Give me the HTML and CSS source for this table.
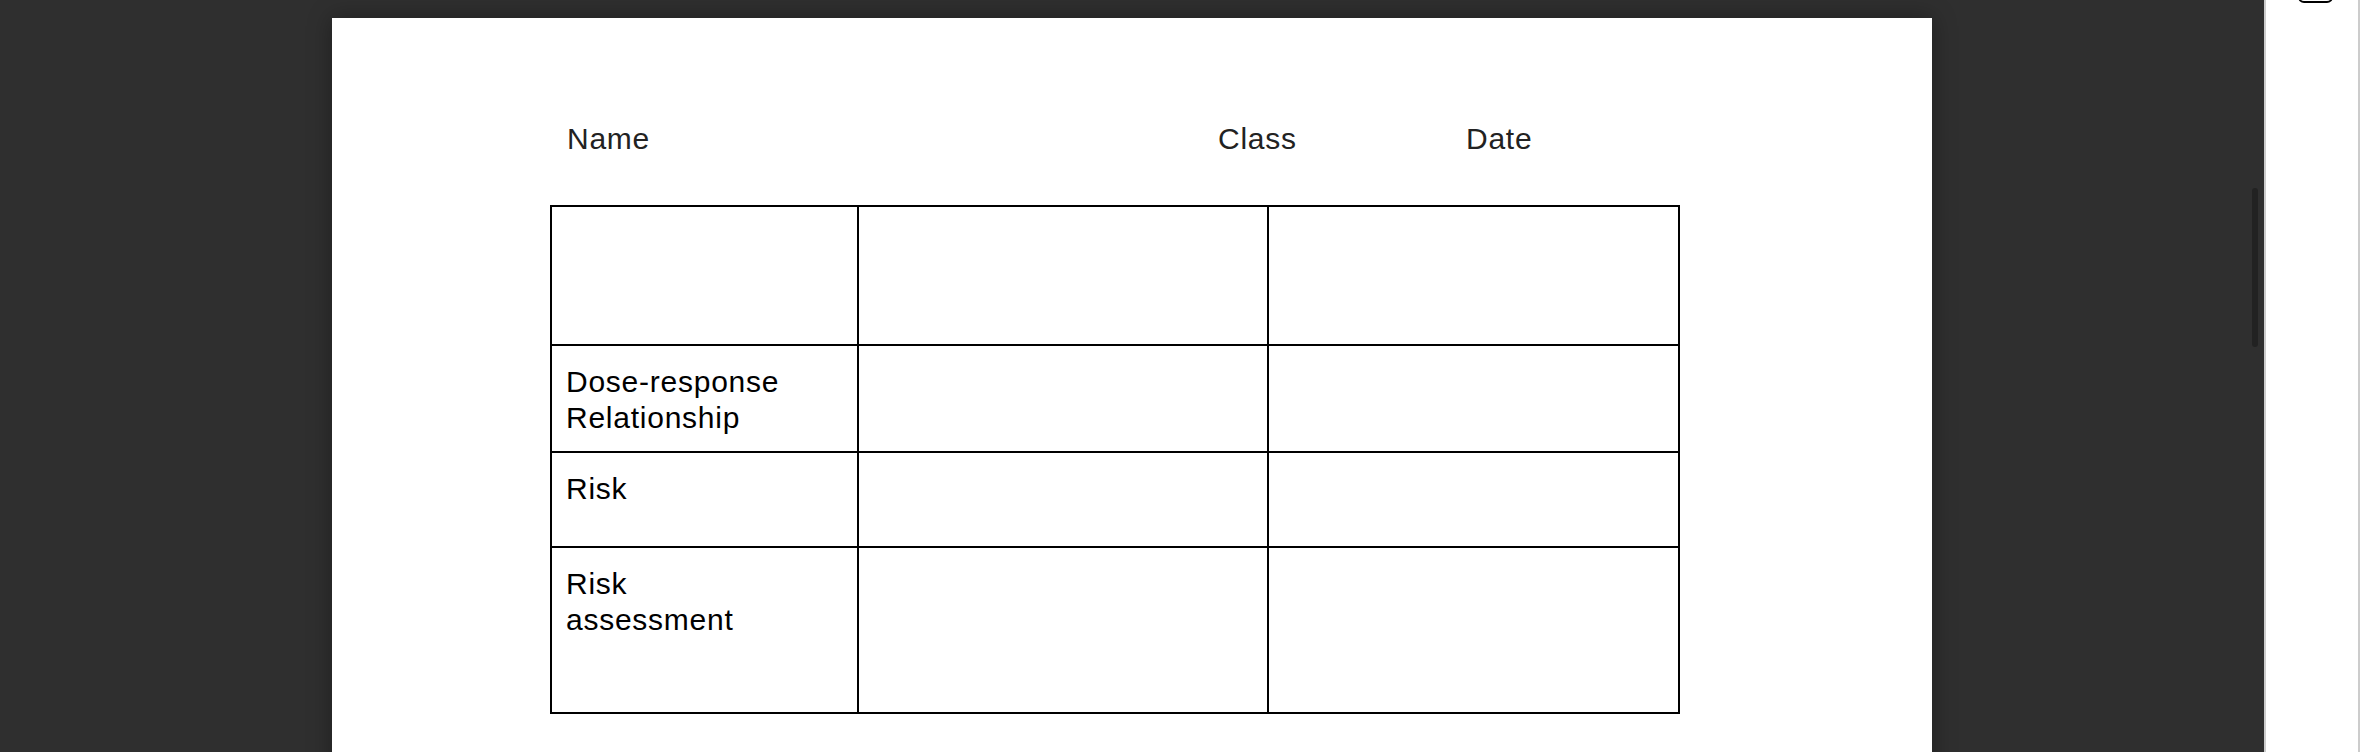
FILE: index.html
```html
<!DOCTYPE html>
<html>
<head>
<meta charset="utf-8">
<link rel="stylesheet" href="styles.css">
</head>
<body>
<div class="app">
  <main class="viewer">
    <div class="page">
      <div class="header-row">
        <span class="field field-name">Name</span>
        <span class="field field-class">Class</span>
        <span class="field field-date">Date</span>
      </div>
      <table class="grid">
        <tr class="r1"><td class="c1"></td><td class="c2"></td><td class="c3"></td></tr>
        <tr class="r2"><td class="c1">Dose-response<br>Relationship</td><td class="c2"></td><td class="c3"></td></tr>
        <tr class="r3"><td class="c1">Risk</td><td class="c2"></td><td class="c3"></td></tr>
        <tr class="r4"><td class="c1">Risk<br>assessment</td><td class="c2"></td><td class="c3"></td></tr>
      </table>
    </div>
    <div class="scroll-thumb"></div>
  </main>
  <aside class="side-panel">
    <div class="side-icon"></div>
  </aside>
</div>
</body>
</html>
```

FILE: styles.css
```css
html, body {
  margin: 0;
  padding: 0;
  height: 100%;
  overflow: hidden;
}
body {
  background: #2f2f2f;
  font-family: "Liberation Sans", Arial, sans-serif;
}
.app {
  display: flex;
  height: 752px;
}
.viewer {
  position: relative;
  width: 2264px;
  flex: none;
  background: #2f2f2f;
  padding-top: 18px;
  padding-left: 332px;
  box-sizing: border-box;
  overflow: hidden;
}
.page {
  width: 1600px;
  height: 900px;
  background: #ffffff;
  box-shadow: 0 0 22px rgba(0, 0, 0, 0.35);
  padding-top: 103px;
  padding-left: 218px;
  box-sizing: border-box;
}
.header-row {
  display: flex;
  padding-left: 17px;
  font-size: 30px;
  line-height: 36px;
  letter-spacing: 0.75px;
  color: #222222;
}
.field-name { width: 651px; }
.field-class { width: 248px; }
.grid {
  margin-top: 48px;
  border-collapse: separate;
  border-spacing: 0;
  table-layout: fixed;
  width: 1130px;
  border-top: 2px solid #000;
  border-left: 2px solid #000;
  font-size: 30px;
  line-height: 36px;
  letter-spacing: 0.75px;
  color: #000;
}
.grid td {
  box-sizing: border-box;
  border-right: 2px solid #000;
  border-bottom: 2px solid #000;
  vertical-align: top;
  padding: 18px 10px 0 14px;
}
.c1 { width: 307px; }
.c2 { width: 410px; }
.c3 { width: 411px; }
.r1 td { height: 139px; }
.r2 td { height: 107px; }
.r3 td { height: 95px; }
.r4 td { height: 166px; }
.scroll-thumb {
  position: absolute;
  left: 2252px;
  top: 188px;
  width: 6px;
  height: 159px;
  border-radius: 3px;
  background: #222222;
}
.side-panel {
  flex: none;
  width: 96px;
  background: #ffffff;
  border-left: 2px solid #cccccc;
  border-right: 2px solid #cccccc;
  box-sizing: border-box;
  overflow: hidden;
}
.side-icon {
  width: 35px;
  height: 30px;
  margin-top: -27px;
  margin-left: 32px;
  border: 2px solid #000;
  border-radius: 6px;
  box-sizing: border-box;
}
```
